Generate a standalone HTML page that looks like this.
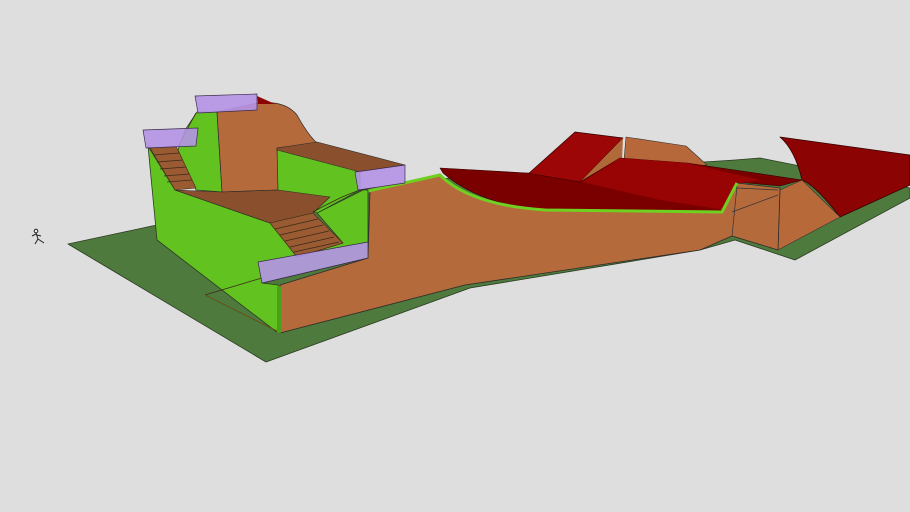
<!DOCTYPE html>
<html><head><style>
html,body{margin:0;padding:0;background:#dedede;}
svg{display:block}
</style></head><body>
<svg width="910" height="512" viewBox="0 0 910 512" xmlns="http://www.w3.org/2000/svg" stroke-linejoin="round">
<rect width="910" height="512" fill="#dedede"/>
<!-- ground -->
<polygon points="68,244 152,226 420,180 735,160 760,158 910,188 910,198 795,260 735,240 700,250 470,288 266,362" fill="#4f7a3d" stroke="#2b3a22" stroke-width="0.8"/>
<!-- red far ramp -->
<polygon points="527,175 575,132 623,138 580,182" fill="#9c0606" stroke="#300" stroke-width="0.8"/>
<polygon points="580,182 623,138 622,160 600,172" fill="#b06a3a"/>
<polygon points="626,137 686,146 707,165 688,168 624,160" fill="#b6683a" stroke="#333" stroke-width="0.6"/>
<!-- right quarter pipe -->
<path d="M780,137 L910,155 L910,185 L840,217 Q815,185 802,180 Q795,150 780,137 Z" fill="#8c0303" stroke="#300" stroke-width="0.8"/>
<polygon points="780,190 802,180 840,217 778,250" fill="#b8693a" stroke="#333" stroke-width="0.6"/>
<!-- middle red deck -->
<path d="M440,168 L527,173 L580,182 L620,158 L687,163 L802,180 L780,186 L737,182 L722,212 L545,210 Q480,205 443,173 Z" fill="#7a0000" stroke="#300" stroke-width="0.6"/>
<polygon points="582,182 620,158 687,163 760,180 737,184 725,210 660,200" fill="#980303"/>
<!-- long brown wall -->
<path d="M280,285 L368,258 L370,190 L440,174 Q470,205 545,210 L722,212 L737,183 L780,188 L778,250 L732,236 L700,250 L465,285 L280,333 Z" fill="#b56a3c" stroke="#2b2b2b" stroke-width="0.8"/>
<path d="M368,191 L440,175 Q470,205 545,210 L722,212 L737,183" fill="none" stroke="#6fd020" stroke-width="3"/>
<line x1="737" y1="186" x2="732" y2="236" stroke="#333" stroke-width="0.7"/>
<line x1="732" y1="212" x2="778" y2="195" stroke="#333" stroke-width="0.7"/>
<line x1="737" y1="188" x2="778" y2="190" stroke="#333" stroke-width="0.7"/>
<!-- green left structure -->
<polygon points="148,146 175,190 270,223 297,257 343,243 317,213 363,190 368,190 368,258 262,283 278,285 278,333 157,240" fill="#62c21f" stroke="#2b3a22" stroke-width="0.8"/>
<polygon points="277,285 277,333 281,333 281,287" fill="#4aa018"/>
<!-- upper green -->
<polygon points="197,112 217,112 222,192 196,190 178,150 185,130" fill="#62c21f" stroke="#2b3a22" stroke-width="0.7"/>
<polygon points="277,148 360,170 360,190 317,213 277,190" fill="#62c21f" stroke="#2b3a22" stroke-width="0.7"/>
<!-- brown tall block -->
<path d="M217,112 L257,103 Q285,100 297,115 Q308,135 317,143 L277,148 L278,190 L222,192 Z" fill="#b56a3c" stroke="#2b2b2b" stroke-width="0.7"/>
<!-- top floor -->
<polygon points="277,148 317,142 405,165 360,172 277,150" fill="#8a4f2c" stroke="#2b2b2b" stroke-width="0.6"/>
<!-- middle floor -->
<polygon points="175,190 222,192 278,190 330,197 313,213 270,223" fill="#8a4f2c" stroke="#2b2b2b" stroke-width="0.6"/>
<!-- stairs -->
<g fill="#9a5a32" stroke="#3a2a1a" stroke-width="0.6">
<polygon points="150,148 176,146 196,188 175,190"/>
<polygon points="270,223 313,213 343,243 297,257"/>
</g>
<g stroke="#3a2a1a" stroke-width="0.8">
<line x1="154" y1="155" x2="179" y2="153"/><line x1="157" y1="162" x2="183" y2="160"/><line x1="160" y1="169" x2="186" y2="167"/><line x1="164" y1="176" x2="189" y2="174"/><line x1="167" y1="182" x2="192" y2="180"/>
<line x1="275" y1="229" x2="318" y2="219"/><line x1="280" y1="235" x2="323" y2="225"/><line x1="285" y1="241" x2="329" y2="231"/><line x1="290" y1="247" x2="334" y2="237"/><line x1="294" y1="252" x2="339" y2="242"/>
<polyline points="178,146 183,138 187,130 191,122 196,113" fill="none"/>
<polyline points="313,212 322,207 332,202 342,197 352,193 360,190" fill="none"/>
<polyline points="205,295 215,292 225,289 235,286 245,283 255,280 262,278" fill="none"/>
<line x1="205" y1="295" x2="277" y2="331" stroke="#6a4a1a"/>
</g>
<!-- purple rails -->
<g fill="#b594e6" fill-opacity="0.9" stroke="#3a2a4a" stroke-width="0.7">
<polygon points="195,96 257,94 257,110 198,113"/>
<polygon points="143,130 198,128 196,146 146,148"/>
<polygon points="355,172 405,165 405,183 358,190"/>
<polygon points="258,262 368,242 368,258 262,283"/>
</g>
<polygon points="257,96 275,104 258,104" fill="#8c0303"/>
<!-- person -->
<g stroke="#222" stroke-width="1" fill="none">
<circle cx="36" cy="231" r="1.8" fill="#eee"/>
<path d="M36 233 L38 239 L44 243 M38 239 L35 244 M36 234 L32 236 M37 235 L41 236"/>
</g>
</svg>
</body></html>
